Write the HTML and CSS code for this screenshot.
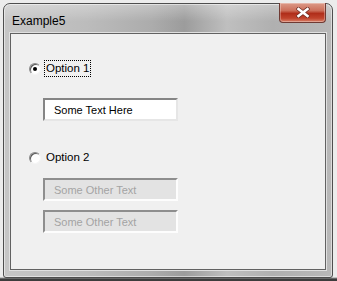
FILE: index.html
```html
<!DOCTYPE html>
<html lang="en">
<head>
    <meta charset="UTF-8">
    <title>Example5</title>
    <link rel="stylesheet" href="styles.css">
</head>
<body>
    <div class="window">
        <div class="titlebar">
            <span class="title">Example5</span>
            <div class="close-button">
                <svg width="14" height="11" viewBox="0 0 14 11">
                    <path d="M2.5 2 L11.5 9 M11.5 2 L2.5 9" stroke="#6b2a20" stroke-width="4" stroke-linecap="square"/>
                    <path d="M2.5 2 L11.5 9 M11.5 2 L2.5 9" stroke="#ffffff" stroke-width="2.6" stroke-linecap="square"/>
                </svg>
            </div>
        </div>

        <!-- client area -->
        <div class="client">
            <div class="option option-first">
                <span class="radio checked"></span>
                <span class="caption focused">Option 1</span>
            </div>
            <div class="textbox textbox-first">Some Text Here</div>

            <div class="option option-second">
                <span class="radio"></span>
                <span class="caption">Option 2</span>
            </div>
            <div class="textbox disabled textbox-second">Some Other Text</div>
            <div class="textbox disabled textbox-third">Some Other Text</div>
        </div>
    </div>
</body>
</html>
```

FILE: styles.css
```css
* {
    box-sizing: border-box;
    margin: 0;
    padding: 0;
}

body {
    width: 337px;
    height: 281px;
    overflow: hidden;
    background: linear-gradient(#ececec 0, #ececec 277px, #3c3c3c 279px);
    font-family: "Liberation Sans", Arial, sans-serif;
    padding: 3px 0 0 3px;
}

.window {
    width: 330px;
    height: 275px;
    border: 1px solid #4e4e4e;
    border-radius: 7px 7px 3px 3px;
    background: linear-gradient(90deg, #c6c6c6 0%, #bcbcbc 25%, #acacac 45%, #9c9c9c 55%, #bfbfbf 68%, #b0b0b0 82%, #b8b8b8 100%);
    box-shadow: inset 0 0 0 1px rgba(255,255,255,0.5);
    display: flex;
    flex-direction: column;
}

.titlebar {
    height: 29px;
    display: flex;
    justify-content: space-between;
    align-items: flex-start;
    padding-left: 8px;
    background: linear-gradient(rgba(255,255,255,0.3), rgba(255,255,255,0) 60%);
    border-radius: 6px 6px 0 0;
}

.title {
    font-size: 12px;
    color: #000;
    margin-top: 10px;
}

.close-button {
    width: 47px;
    height: 20px;
    margin-top: -1px;
    margin-right: 6px;
    border: 1px solid #6f3a33;
    border-top: none;
    border-radius: 0 0 4px 4px;
    background: linear-gradient(#dc9a88 0%, #cc6f5a 40%, #b02e1a 55%, #c0432c 80%, #d9826a 100%);
    box-shadow: inset 0 0 0 1px rgba(255,255,255,0.3);
    display: flex;
    align-items: center;
    justify-content: center;
}

.client {
    height: 237px;
    margin: 0 6px;
    border: 1px solid #626262;
    background-color: #f0f0f0;
    box-shadow: 0 0 0 1px #e0e0e0;
    display: flex;
    flex-direction: column;
    align-items: flex-start;
    font-size: 11px;
}

.option {
    display: flex;
    align-items: center;
    gap: 3px;
    padding-left: 18px;
    height: 17px;
}

.option-first {
    margin-top: 26px;
}

.option-second {
    margin-top: 28px;
}

.radio {
    width: 12px;
    height: 12px;
    border-radius: 50%;
    border: 1px solid;
    border-color: #8a8a8a #f4f4f4 #f4f4f4 #8a8a8a;
    background-color: #fff;
    box-shadow: inset 1px 1px 0 #5a5a5a;
    display: flex;
    align-items: center;
    justify-content: center;
}

.radio.checked::after {
    content: "";
    width: 4px;
    height: 4px;
    border-radius: 50%;
    background-color: #000;
}

.caption {
    color: #000;
    font-size: 11.5px;
    line-height: 15px;
    padding: 0 1px;
    border: 1px solid transparent;
}

.caption.focused {
    border: 1px dotted #000;
}

.textbox {
    width: 135px;
    height: 23px;
    margin-left: 32px;
    padding-left: 9px;
    display: flex;
    align-items: center;
    background-color: #fff;
    color: #000;
    border: 2px solid;
    border-color: #858585 #e6e6e6 #e6e6e6 #858585;
}

.textbox-first {
    margin-top: 21px;
}

.textbox-second {
    margin-top: 12px;
}

.textbox-third {
    margin-top: 9px;
}

.textbox.disabled {
    background-color: #e3e3e3;
    color: #a3a3a3;
    border-color: #8e8e8e #fdfdfd #fdfdfd #8e8e8e;
}
```
